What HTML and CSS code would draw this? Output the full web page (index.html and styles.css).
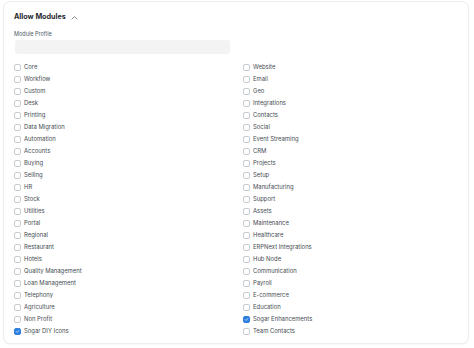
FILE: index.html
```html
<!DOCTYPE html>
<html lang="en">

<head>
  <meta charset="UTF-8" />
  <meta name="viewport" content="width=device-width, initial-scale=1.0" />
  <title>Allow Modules</title>
  <link rel="stylesheet" href="styles.css">
</head>

<body>
  <div class="card">
    <div class="section-head">
      <span class="section-title">Allow Modules</span>
      <svg class="chevron" width="7" height="5" viewBox="0 0 7 5">
        <path d="M1 4 L3.5 1.5 L6 4" fill="none" stroke="#7c8791" stroke-width="0.9" stroke-linecap="round" stroke-linejoin="round" />
      </svg>
    </div>

    <label class="field-label" for="module-profile">Module Profile</label>
    <div class="field-row">
      <input type="text" id="module-profile" class="field-input" />
    </div>

    <div class="modules">
      <div class="module-col" id="col-left"></div>
      <div class="module-col" id="col-right"></div>
    </div>
  </div>

  <script>
    const leftModules = [
      'Core', 'Workflow', 'Custom', 'Desk', 'Printing', 'Data Migration', 'Automation',
      'Accounts', 'Buying', 'Selling', 'HR', 'Stock', 'Utilities', 'Portal', 'Regional',
      'Restaurant', 'Hotels', 'Quality Management', 'Loan Management', 'Telephony',
      'Agriculture', 'Non Profit', 'Sogar DIY Icons'
    ];
    const rightModules = [
      'Website', 'Email', 'Geo', 'Integrations', 'Contacts', 'Social', 'Event Streaming',
      'CRM', 'Projects', 'Setup', 'Manufacturing', 'Support', 'Assets', 'Maintenance',
      'Healthcare', 'ERPNext Integrations', 'Hub Node', 'Communication', 'Payroll',
      'E-commerce', 'Education', 'Sogar Enhancements', 'Team Contacts'
    ];
    const checked = ['Sogar DIY Icons', 'Sogar Enhancements'];

    function fillColumn(id, list) {
      const col = document.getElementById(id);
      list.forEach((name) => {
        const row = document.createElement('label');
        row.className = 'module-row';
        const box = document.createElement('span');
        box.className = 'check' + (checked.includes(name) ? ' on' : '');
        if (checked.includes(name)) {
          box.innerHTML = '<svg width="7" height="7" viewBox="0 0 7 7"><path d="M1.8 3.6 L3 4.8 L5.3 2.2" fill="none" stroke="#fff" stroke-width="0.9" stroke-linecap="round" stroke-linejoin="round"/></svg>';
        }
        const text = document.createElement('span');
        text.className = 'module-name';
        text.textContent = name;
        row.appendChild(box);
        row.appendChild(text);
        col.appendChild(row);
      });
    }

    fillColumn('col-left', leftModules);
    fillColumn('col-right', rightModules);
  </script>
</body>

</html>
```

FILE: styles.css
```css
body {
  font-family: 'Inter', 'Liberation Sans', sans-serif;
  background: #fff;
  margin: 0;
  padding: 1px 5px 4px 3px;
  color: #1f272e;
}

.card {
  width: 466px;
  box-sizing: border-box;
  padding: 10px 11px 6px 10px;
  background: #fff;
  border: 1px solid #ebedef;
  border-radius: 7px;
  box-shadow: 0 1px 2px rgba(0, 0, 0, 0.04);
}

.section-head {
  display: flex;
  align-items: center;
  gap: 5px;
  height: 10px;
}

.section-title {
  font-size: 7.2px;
  font-weight: 700;
  line-height: 10px;
  color: #1f272e;
}

.chevron {
  display: block;
}

.field-label {
  display: block;
  margin-top: 8px;
  font-size: 5.5px;
  line-height: 8px;
  color: #4c5a67;
}

.field-row {
  margin-top: 2px;
  width: 215px;
  padding-left: 1px;
}

.field-input {
  display: block;
  width: 100%;
  height: 14px;
  box-sizing: border-box;
  border: none;
  border-radius: 3px;
  background: #f3f3f3;
  padding: 0;
  margin: 0;
}

.modules {
  display: grid;
  grid-template-columns: 215px 215px;
  column-gap: 14px;
  margin-top: 7px;
}

.module-row {
  display: flex;
  align-items: center;
  gap: 3px;
  height: 12px;
}

.check {
  width: 7px;
  height: 7px;
  box-sizing: border-box;
  border: 1px solid #c7ccd1;
  border-radius: 2px;
  background: #fff;
  display: flex;
  align-items: center;
  justify-content: center;
}

.check svg {
  display: block;
}

.check.on {
  background: #2d7fe0;
  border-color: #2d7fe0;
}

.module-name {
  font-size: 5.9px;
  line-height: 12px;
  color: #454c53;
}
```
